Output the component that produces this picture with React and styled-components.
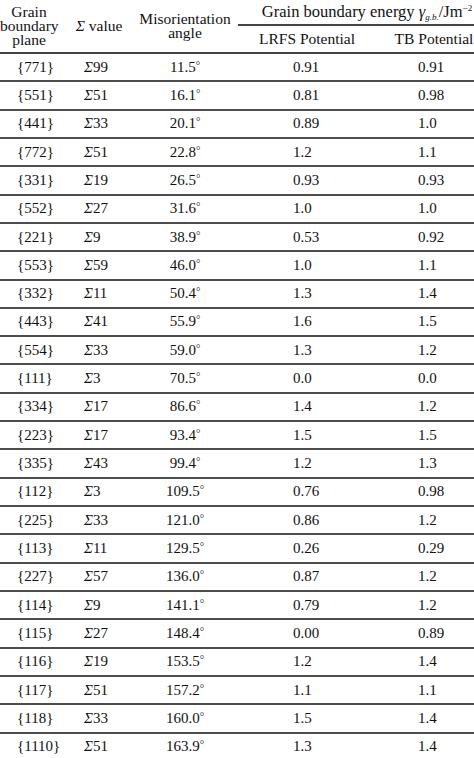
import React from 'react';
import styled, { createGlobalStyle } from 'styled-components';

const GlobalStyle = createGlobalStyle`
  html, body {
    margin: 0;
    padding: 0;
    background: #fff;
    overflow: hidden;
  }
`;

const rows = [
  ['{771}', '99', '11.5', '0.91', '0.91'],
  ['{551}', '51', '16.1', '0.81', '0.98'],
  ['{441}', '33', '20.1', '0.89', '1.0'],
  ['{772}', '51', '22.8', '1.2', '1.1'],
  ['{331}', '19', '26.5', '0.93', '0.93'],
  ['{552}', '27', '31.6', '1.0', '1.0'],
  ['{221}', '9', '38.9', '0.53', '0.92'],
  ['{553}', '59', '46.0', '1.0', '1.1'],
  ['{332}', '11', '50.4', '1.3', '1.4'],
  ['{443}', '41', '55.9', '1.6', '1.5'],
  ['{554}', '33', '59.0', '1.3', '1.2'],
  ['{111}', '3', '70.5', '0.0', '0.0'],
  ['{334}', '17', '86.6', '1.4', '1.2'],
  ['{223}', '17', '93.4', '1.5', '1.5'],
  ['{335}', '43', '99.4', '1.2', '1.3'],
  ['{112}', '3', '109.5', '0.76', '0.98'],
  ['{225}', '33', '121.0', '0.86', '1.2'],
  ['{113}', '11', '129.5', '0.26', '0.29'],
  ['{227}', '57', '136.0', '0.87', '1.2'],
  ['{114}', '9', '141.1', '0.79', '1.2'],
  ['{115}', '27', '148.4', '0.00', '0.89'],
  ['{116}', '19', '153.5', '1.2', '1.4'],
  ['{117}', '51', '157.2', '1.1', '1.1'],
  ['{118}', '33', '160.0', '1.5', '1.4'],
  ['{1110}', '51', '163.9', '1.3', '1.4'],
];

const Table = styled.table`
  width: 492px;
  table-layout: fixed;
  border-collapse: separate;
  border-spacing: 0;
  font-family: "Liberation Serif", "DejaVu Serif", serif;
  color: #111;
`;

const HeadCell = styled.th`
  font-weight: 400;
  font-size: 15.5px;
  line-height: 14px;
  padding: 0;
  padding-right: ${(props) => props.shift || 0}px;
  text-align: center;
  vertical-align: middle;
  white-space: nowrap;
  height: ${(props) => props.h || 26}px;
  border-bottom: 2px solid #444;
`;

const EnergyHead = styled(HeadCell)`
  font-size: 16.5px;
  padding-top: 1px;
  padding-left: 4px;
  vertical-align: top;
`;

const Cell = styled.td`
  font-size: 15px;
  height: 26.32px;
  padding: 0;
  padding-left: ${(props) => props.left || 0}px;
  padding-right: ${(props) => props.right || 0}px;
  text-align: ${(props) => (props.center ? 'center' : 'left')};
  vertical-align: middle;
  white-space: nowrap;
  border-bottom: 2px solid #4d4d4d;
`;

const Sigma = styled.i`
  font-style: italic;
`;

const Sub = styled.sub`
  font-size: 9px;
  font-style: italic;
  vertical-align: -3px;
`;

const Sup = styled.sup`
  font-size: 9px;
  vertical-align: 6px;
`;

const Deg = styled.span`
  font-size: 11px;
  vertical-align: 3px;
`;

const App = () => (
  <>
    <GlobalStyle />
    <Table>
      <colgroup>
        <col style={{ width: 62 }} />
        <col style={{ width: 74 }} />
        <col style={{ width: 102 }} />
        <col style={{ width: 138 }} />
        <col style={{ width: 116 }} />
      </colgroup>
      <thead>
        <tr>
          <HeadCell rowSpan={2} shift={4}>
            Grain
            <br />
            boundary
            <br />
            plane
          </HeadCell>
          <HeadCell rowSpan={2}>
            <Sigma>Σ</Sigma> value
          </HeadCell>
          <HeadCell rowSpan={2} shift={4}>
            Misorientation
            <br />
            angle
          </HeadCell>
          <EnergyHead colSpan={2} h={20}>
            Grain boundary energy <i>γ</i>
            <Sub>g.b.</Sub>/Jm<Sup>−2</Sup>
          </EnergyHead>
        </tr>
        <tr>
          <HeadCell>LRFS Potential</HeadCell>
          <HeadCell>TB Potential</HeadCell>
        </tr>
      </thead>
      <tbody>
        {rows.map(([plane, sigma, angle, lrfs, tb]) => (
          <tr key={plane}>
            <Cell left={17}>{plane}</Cell>
            <Cell left={22}>
              <Sigma>Σ</Sigma>
              {sigma}
            </Cell>
            <Cell center right={4}>
              {angle}
              <Deg>°</Deg>
            </Cell>
            <Cell left={55}>{lrfs}</Cell>
            <Cell left={42}>{tb}</Cell>
          </tr>
        ))}
      </tbody>
    </Table>
  </>
);

export default App;
